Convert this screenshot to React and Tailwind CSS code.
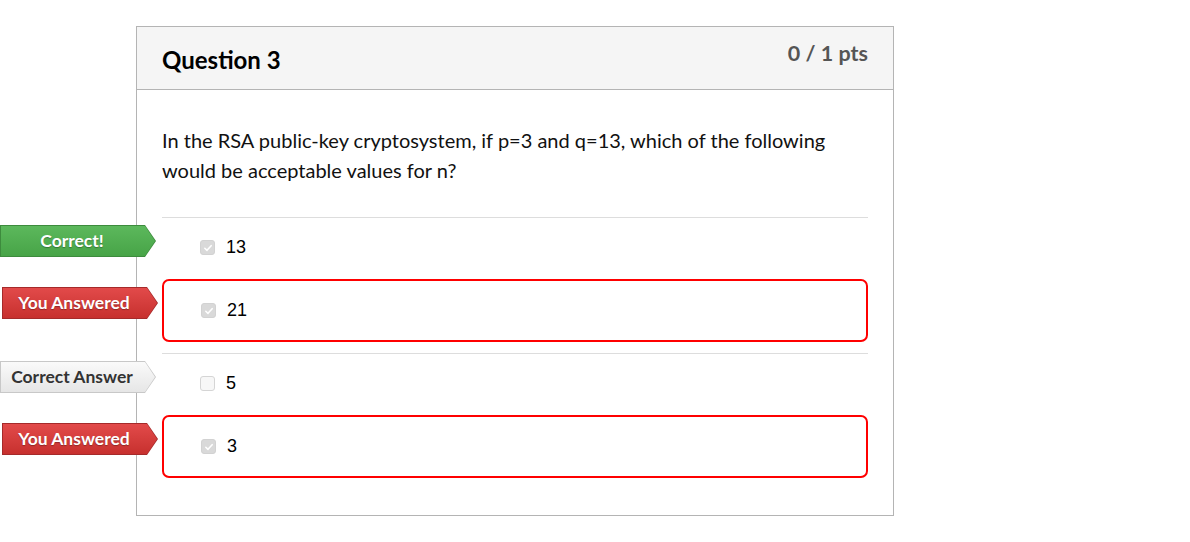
import React from 'react'

const labelStyles = {
  correct: {
    outer: 'bg-[#3d8b3d]',
    inner: 'bg-gradient-to-b from-[#5cb85c] to-[#47a447] text-white [text-shadow:0_1px_1px_rgba(0,0,0,0.3)]',
  },
  wrong: {
    outer: 'bg-[#a52a2a]',
    inner: 'bg-gradient-to-b from-[#e24a4a] to-[#c7302e] text-white [text-shadow:0_1px_1px_rgba(0,0,0,0.3)]',
  },
  answer: {
    outer: 'bg-[#c8c8c8]',
    inner: 'bg-gradient-to-b from-[#fafafa] to-[#e6e6e6] text-[#333]',
  },
}

function Label({ kind, text }) {
  const s = labelStyles[kind]
  return (
    <div className={`absolute left-[-162px] h-[32px] w-[156px] p-px [clip-path:polygon(0_0,calc(100%_-_11px)_0,100%_50%,calc(100%_-_11px)_100%,0_100%)] ${s.outer}`}>
      <div className={`flex h-full w-full items-center justify-center pr-[12px] text-[17.5px] font-bold [clip-path:polygon(0_0,calc(100%_-_10px)_0,100%_50%,calc(100%_-_10px)_100%,0_100%)] ${s.inner}`}>
        {text}
      </div>
    </div>
  )
}

function Box({ checked }) {
  return (
    <span className={`flex h-[15px] w-[15px] items-center justify-center rounded-[3px] border ${checked ? 'border-[#d2d2d2] bg-[#d9d9d9]' : 'border-[#d5d5d5] bg-[#f7f7f7]'}`}>
      {checked && (
        <svg viewBox="0 0 12 12" className="h-[10px] w-[10px]">
          <path d="M2.2 6.3 L4.8 8.8 L9.8 3.2" fill="none" stroke="#fff" strokeWidth="1.9" strokeLinecap="round" strokeLinejoin="round" />
        </svg>
      )}
    </span>
  )
}

function Answer({ value, checked, label, wrong, last }) {
  if (wrong) {
    return (
      <div className={`relative flex h-[63px] items-center gap-[11px] rounded-[7px] border-2 border-[#ff0000] pl-[37px] ${last ? '' : 'mb-[11px]'}`}>
        <div className="absolute left-0 top-[6px]">
          <Label kind={label} text="You Answered" />
        </div>
        <Box checked={checked} />
        <span className="text-[18px] text-black [font-family:'Liberation_Sans',Arial,sans-serif]">{value}</span>
      </div>
    )
  }
  return (
    <div className="relative flex h-[62px] items-center gap-[11px] border-t border-[#dddddd] pb-[2px] pl-[38px]">
      <div className="absolute left-0 top-[7px]">
        <Label kind={label} text={label === 'correct' ? 'Correct!' : 'Correct Answer'} />
      </div>
      <Box checked={checked} />
      <span className="text-[18px] text-black [font-family:'Liberation_Sans',Arial,sans-serif]">{value}</span>
    </div>
  )
}

export default function App() {
  return (
    <div className="min-h-screen bg-white pl-[136px] pt-[26px] [font-family:Lato,'Noto_Sans',sans-serif]">
      <div className="w-[758px] border border-[#b4b4b4] bg-white">
        <div className="flex h-[63px] items-start justify-between border-b border-[#b4b4b4] bg-[#f5f5f5] px-[25px]">
          <h2 className="pt-[15px] text-[24px] font-bold text-black">Question 3</h2>
          <span className="pt-[10px] text-[21.5px] font-bold text-[#555]">0 / 1 pts</span>
        </div>
        <div className="px-[25px] pb-[37px] pt-[35px]">
          <p className="text-[20px] leading-[30px] text-[#111]">
            In the RSA public-key cryptosystem, if p=3 and q=13, which of the following<br />
            would be acceptable values for n?
          </p>
          <div className="mt-[32px]">
            <Answer value="13" checked label="correct" />
            <Answer value="21" checked label="wrong" wrong />
            <Answer value="5" label="answer" />
            <Answer value="3" checked label="wrong" wrong last />
          </div>
        </div>
      </div>
    </div>
  )
}
